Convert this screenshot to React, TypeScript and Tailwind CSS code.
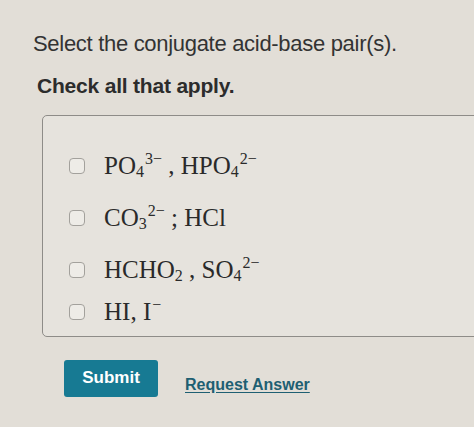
import React from "react";

function Box() {
  return (
    <span className="w-[16px] h-[16px] rounded-[4px] border border-[#a3a19c] bg-[#eeece7] shrink-0" />
  );
}

function Opt({ children, className = "" }: { children: React.ReactNode; className?: string }) {
  return (
    <label className={`flex items-center gap-[19px] h-[26px] ${className}`}>
      <Box />
      <span className="font-['Liberation_Serif',serif] text-[25px] text-[#2a2a2a] leading-[26px] whitespace-nowrap">
        {children}
      </span>
    </label>
  );
}

const Sub = ({ children }: { children: React.ReactNode }) => (
  <sub className="text-[16px] bottom-[-0.2em]">{children}</sub>
);
const Sup = ({ children }: { children: React.ReactNode }) => (
  <sup className="text-[16px] top-[-0.6em] ml-[1px]">{children}</sup>
);

export default function App() {
  return (
    <div className="w-[474px] h-[427px] bg-[#e2ded7] font-['Liberation_Sans',Arial,sans-serif] overflow-hidden pl-[33px] pt-[30px]">
      <h1 className="text-[22px] text-[#333] leading-tight tracking-[-0.3px]">
        Select the conjugate acid-base pair(s).
      </h1>
      <p className="mt-[12px] ml-[4px] text-[21px] font-bold text-[#2c2c2c] tracking-[-0.2px]">Check all that apply.</p>
      <div className="mt-[14px] ml-[9px] w-[440px] h-[222px] border border-[#8e8c88] rounded-[5px] bg-[#e6e3dd] pl-[26px] pt-[37px]">
        <Opt>
          PO<Sub>4</Sub>
          <Sup>3−</Sup>&nbsp;, HPO<Sub>4</Sub>
          <Sup>2−</Sup>
        </Opt>
        <Opt className="mt-[26px]">
          CO<Sub>3</Sub>
          <Sup>2−</Sup>&nbsp;; HCl
        </Opt>
        <Opt className="mt-[26px]">
          HCHO<Sub>2</Sub> , SO<Sub>4</Sub>
          <Sup>2−</Sup>
        </Opt>
        <Opt className="mt-[16px]">
          HI, I<Sup>−</Sup>
        </Opt>
      </div>
      <div className="mt-[22px] ml-[31px] flex items-center gap-[27px]">
        <button className="w-[94px] h-[37px] rounded-[3px] bg-[#177a93] text-white font-bold text-[17px]">
          Submit
        </button>
        <a className="text-[16px] font-bold text-[#1e5f72] underline underline-offset-2 mt-[14px]">Request Answer</a>
      </div>
    </div>
  );
}
